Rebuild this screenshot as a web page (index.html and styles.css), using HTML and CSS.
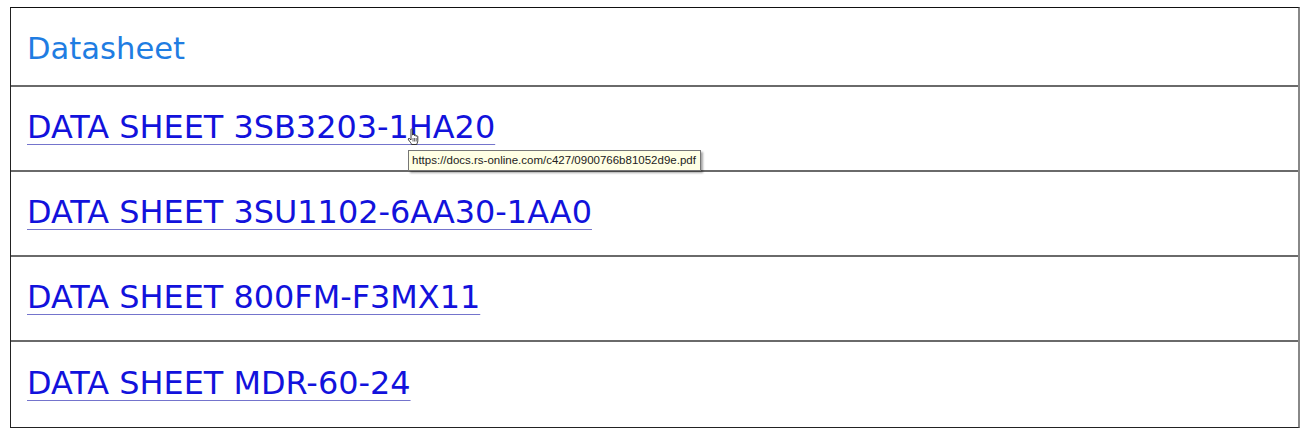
FILE: index.html
```html
<!DOCTYPE html>
<html>
<head>
<meta charset="utf-8">
<link rel="stylesheet" href="styles.css">
</head>
<body>
<div class="sheet">
  <div class="row head"><span class="title">Datasheet</span></div>
  <div class="row item">
    <span class="linkwrap">
      <a class="link" href="#">DATA SHEET 3SB3203-1HA20</a>
      <svg class="cursor" width="14" height="18" viewBox="0 0 14 18">
        <path d="M4 1.5 C4 0.7 5.6 0.7 5.6 1.5 L5.6 7 L6 7 C6 6 7.6 6 7.6 7 L7.6 7.6 C7.6 6.8 9.2 6.8 9.2 7.8 L9.2 8.3 C9.2 7.6 10.8 7.6 10.8 8.6 L10.8 12.5 C10.8 14.5 9.8 15.5 9.8 16.5 L4.6 16.5 C4.2 15 2.8 13.8 1.6 12 C0.8 10.8 1.6 9.8 2.8 10.8 L4 12 Z" fill="#fff" stroke="#222" stroke-width="0.9" stroke-linejoin="round"/>
        <path d="M6 10 V13.5 M7.6 10 V13.5 M9.2 10 V13.5" stroke="#222" stroke-width="0.7"/>
      </svg>
      <span class="tooltip">https://docs.rs-online.com/c427/0900766b81052d9e.pdf</span>
    </span>
  </div>
  <div class="row item"><a class="link" href="#">DATA SHEET 3SU1102-6AA30-1AA0</a></div>
  <div class="row item"><a class="link" href="#">DATA SHEET 800FM-F3MX11</a></div>
  <div class="row item last"><a class="link" href="#">DATA SHEET MDR-60-24</a></div>
</div>
</body>
</html>
```

FILE: styles.css
```css
html, body {
  margin: 0;
  padding: 0;
  background: #fff;
}
body {
  padding: 7px 0 0 10px;
  font-family: "DejaVu Sans", Verdana, sans-serif;
}
.sheet {
  width: 1290px;
  border-top: 1px solid #111;
  border-left: 1px solid #222;
  border-right: 2px solid #888;
  border-bottom: 1px solid #222;
  box-sizing: border-box;
  display: flex;
  flex-direction: column;
}
.row {
  display: flex;
  align-items: center;
  padding-left: 16px;
  border-bottom: 2px solid #6a6a6a;
  box-sizing: border-box;
}
.row.last {
  border-bottom: none;
}
.head {
  height: 79px;
  padding-top: 3px;
}
.item {
  height: 85px;
  padding-bottom: 3px;
}
.title {
  font-size: 30.6px;
  color: #1f7de2;
}
.linkwrap {
  position: relative;
  display: inline-block;
}
.link {
  font-size: 31.9px;
  color: #1212dc;
  text-decoration: underline;
  text-decoration-color: #7474cc;
  text-decoration-thickness: 1px;
  text-underline-offset: 6px;
}
.cursor {
  position: absolute;
  left: 380px;
  top: 20px;
}
.tooltip {
  position: absolute;
  left: 381px;
  top: 42px;
  white-space: nowrap;
  background: #ffffe4;
  border: 1px solid #767676;
  box-shadow: 2px 2px 2px rgba(0,0,0,0.35);
  font-family: "Liberation Sans", Arial, sans-serif;
  font-size: 11.5px;
  color: #222;
  padding: 3px 4px 3px 3px;
  line-height: 13px;
}
```
